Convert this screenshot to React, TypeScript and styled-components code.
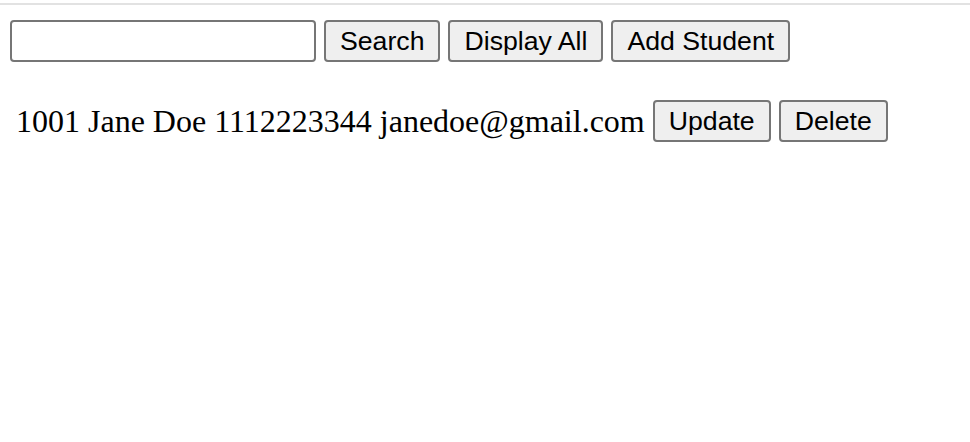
import React from 'react';
import styled, {createGlobalStyle} from 'styled-components';

const GlobalStyle = createGlobalStyle`
  html, body {
    margin: 0;
    padding: 0;
    background: #ffffff;
  }
  body {
    font-family: "Liberation Serif", "Times New Roman", serif;
    color: #000000;
  }
`;

const Page = styled.div`
  margin-top: 3px;
  border-top: 2px solid #e2e2e2;
  padding-top: 15px;
`;

const Toolbar = styled.div`
  display: flex;
  align-items: center;
  gap: 8px;
  padding-left: 10px;
`;

const SearchInput = styled.input`
  box-sizing: border-box;
  width: 306px;
  height: 42px;
  border: 2px solid #767676;
  border-radius: 4px;
  padding: 0 6px;
  font-family: "Liberation Sans", Arial, sans-serif;
  font-size: 26.5px;
  background: #ffffff;
  outline: none;
`;

const Button = styled.button`
  box-sizing: border-box;
  height: 42px;
  padding: 0 14px;
  border: 2px solid #767676;
  border-radius: 4px;
  background: #efefef;
  color: #000000;
  font-family: "Liberation Sans", Arial, sans-serif;
  font-size: 26.67px;
  line-height: 1;
  cursor: pointer;
`;

const StudentRow = styled.div`
  display: flex;
  align-items: center;
  gap: 8px;
  margin-top: 38px;
  padding-left: 16px;
`;

const StudentText = styled.span`
  font-size: 32px;
  line-height: 42px;
  white-space: nowrap;
`;

interface Student {
  id: number;
  name: string;
  phone: string;
  email: string;
}

const students: Student[] = [
  {id: 1001, name: 'Jane Doe', phone: '1112223344', email: 'janedoe@gmail.com'}
];

const App = () => {
  return (
    <Page>
      <GlobalStyle />
      <Toolbar>
        <SearchInput type="text" />
        <Button>Search</Button>
        <Button>Display All</Button>
        <Button>Add Student</Button>
      </Toolbar>
      {students.map(s => (
        <StudentRow key={s.id}>
          <StudentText>
            {s.id} {s.name} {s.phone} {s.email}
          </StudentText>
          <Button>Update</Button>
          <Button>Delete</Button>
        </StudentRow>
      ))}
    </Page>
  );
};

export default App;
